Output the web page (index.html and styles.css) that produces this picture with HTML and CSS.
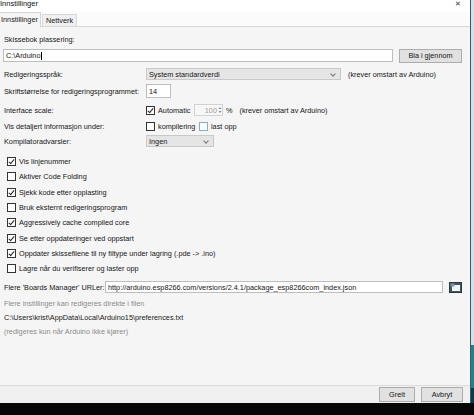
FILE: index.html
```html
<!DOCTYPE html>
<html>
<head>
<meta charset="utf-8">
<link rel="stylesheet" href="styles.css">
</head>
<body>
<div class="screen">
  <div class="main">
    <div class="dialog">
      <div class="titlebar"><span class="title">Innstillinger</span><span class="close">✕</span></div>
      <div class="tabs">
        <div class="tab active">Innstillinger</div>
        <div class="tab">Nettverk</div>
      </div>
      <div class="panel">
        <div class="line top-label">Skissebok plassering:</div>
        <div class="row sketch">
          <div class="input path">C:\Arduino<span class="caret"></span></div>
          <div class="btn browse">Bla i gjennom</div>
        </div>
        <div class="row form r-lang">
          <span class="label">Redigeringsspråk:</span>
          <div class="select lang">System standardverdi<span class="chev"></span></div>
          <span class="note">(krever omstart av Arduino)</span>
        </div>
        <div class="row form r-size">
          <span class="label">Skriftstørrelse for redigeringsprogrammet:</span>
          <div class="input size">14</div>
        </div>
        <div class="row form r-scale">
          <span class="label">Interface scale:</span>
          <span class="cb checked"></span><span class="cb-text auto">Automatic</span>
          <div class="spin">100<span class="arrows"><span>▴</span><span>▾</span></span></div>
          <span class="pct">%</span>
          <span class="note note2">(krever omstart av Arduino)</span>
        </div>
        <div class="row form r-verbose">
          <span class="label">Vis detaljert informasjon under:</span>
          <span class="cb"></span><span class="cb-text comp">kompilering</span>
          <span class="cb hover"></span><span class="cb-text">last opp</span>
        </div>
        <div class="row form r-warn">
          <span class="label">Kompilatoradvarsler:</span>
          <div class="select warn">Ingen<span class="chev"></span></div>
        </div>
        <div class="checklist">
          <div class="check-row"><span class="cb checked"></span><span class="cb-text">Vis linjenummer</span></div>
          <div class="check-row"><span class="cb"></span><span class="cb-text">Aktiver Code Folding</span></div>
          <div class="check-row"><span class="cb checked"></span><span class="cb-text">Sjekk kode etter opplasting</span></div>
          <div class="check-row"><span class="cb"></span><span class="cb-text">Bruk eksternt redigeringsprogram</span></div>
          <div class="check-row"><span class="cb checked"></span><span class="cb-text">Aggressively cache compiled core</span></div>
          <div class="check-row"><span class="cb checked"></span><span class="cb-text">Se etter oppdateringer ved oppstart</span></div>
          <div class="check-row"><span class="cb checked"></span><span class="cb-text">Oppdater skissefilene til ny filtype under lagring (.pde -&gt; .ino)</span></div>
          <div class="check-row"><span class="cb"></span><span class="cb-text">Lagre når du verifiserer og laster opp</span></div>
        </div>
        <div class="row boards">
          <span class="label-b">Flere 'Boards Manager' URLer:</span>
          <div class="input url">http://arduino.esp8266.com/versions/2.4.1/package_esp8266com_index.json</div>
          <span class="win-icon"><svg width="13" height="11" viewBox="0 0 13 11"><rect x="0.5" y="0.5" width="12" height="10" fill="#3d5366" stroke="#2a3a48"/><rect x="3" y="3" width="8" height="6" fill="#f4f6f8"/><rect x="1.5" y="1.5" width="4" height="3" fill="#7a92a8"/></svg></span>
        </div>
        <div class="line gray l1">Flere instillinger kan redigeres direkte i filen</div>
        <div class="line l2">C:\Users\krist\AppData\Local\Arduino15\preferences.txt</div>
        <div class="line gray l3">(redigeres kun når Arduino ikke kjører)</div>
      </div>
      <div class="footer">
        <div class="btn ok">Greit</div>
        <div class="btn cancel">Avbryt</div>
      </div>
    </div>
    <div class="strip"></div>
  </div>
  <div class="taskbar"></div>
</div>
</body>
</html>
```

FILE: styles.css
```css
html, body {
  margin: 0;
  padding: 0;
}
body {
  width: 474px;
  height: 415px;
  overflow: hidden;
  background: #060606;
  font-family: "Liberation Sans", Arial, sans-serif;
  font-size: 7.3px;
  color: #161616;
}
.screen {
  display: flex;
  flex-direction: column;
  height: 415px;
}
.main {
  display: flex;
  height: 403px;
}
.dialog {
  width: 470px;
  display: flex;
  flex-direction: column;
  background: #f0f0f0;
}
.strip {
  flex: 1;
  border-left: 1px solid #2f5f6c;
  background: linear-gradient(#d3e1e8 0, #d3e1e8 345px, #1f8293 345px, #1f8293 388px, #0e3c44 388px);
}
.taskbar {
  flex: 1;
  background: #070707;
}

/* title bar */
.titlebar {
  height: 12px;
  background: #fff;
  display: flex;
  justify-content: space-between;
  align-items: flex-start;
}
.title {
  margin-left: 0;
  font-size: 7.5px;
  line-height: 8px;
  color: #111;
}
.close {
  margin-right: 9px;
  font-size: 7px;
  line-height: 7px;
  color: #333;
}

/* tabs */
.tabs {
  height: 14px;
  display: flex;
  align-items: flex-end;
  background: #fbfbfb;
  position: relative;
  z-index: 1;
}
.tab {
  height: 12px;
  line-height: 11px;
  padding: 0 3px;
  border: 1px solid #d9d9d9;
  border-bottom: none;
  box-sizing: border-box;
  background: #f0f0f0;
  margin-left: 1px;
}
.tab.active {
  height: 15px;
  margin-bottom: -1px;
  margin-left: -1px;
  padding: 1px 2px 0 1px;
  line-height: 11px;
  background: #f5f5f5;
  border-color: #d4d4d4;
  white-space: nowrap;
}

/* panel */
.panel {
  flex: 1;
  border-top: 1px solid #d8d8d8;
  border-bottom: 1px solid #dcdcdc;
  background: #f5f5f5;
  padding: 8px 0 0 4px;
  display: flex;
  flex-direction: column;
}
.line {
  height: 10px;
  line-height: 10px;
  white-space: nowrap;
}
.gray {
  color: #8c8c8c;
}
.row {
  display: flex;
  align-items: center;
  white-space: nowrap;
}
.sketch {
  margin-top: 4px;
  height: 13px;
}
.input {
  background: #fff;
  border: 1px solid #bdbdbd;
  box-sizing: border-box;
  padding-left: 2px;
  display: flex;
  align-items: center;
  overflow: hidden;
}
.input.path {
  width: 390px;
  height: 13px;
  margin-left: -1px;
}
.caret {
  width: 1px;
  height: 8px;
  background: #000;
  margin-left: 1px;
}
.btn {
  background: #e1e1e1;
  border: 1px solid #adadad;
  box-sizing: border-box;
  display: flex;
  align-items: center;
  justify-content: center;
}
.browse {
  width: 63px;
  height: 14px;
  margin-left: 6px;
}
.form {
  height: 12px;
}
.label {
  width: 142px;
}
.select {
  background: #e5e5e5;
  border: 1px solid #c9c9c9;
  box-sizing: border-box;
  height: 12px;
  padding-left: 2px;
  display: flex;
  align-items: center;
  position: relative;
}
.chev {
  position: absolute;
  right: 5px;
  top: 3px;
  width: 3px;
  height: 3px;
  border-right: 1px solid #777;
  border-bottom: 1px solid #777;
  transform: rotate(45deg);
}
.select.lang {
  width: 195px;
}
.note {
  margin-left: 7px;
}
.r-lang {
  margin-top: 6px;
}
.r-size {
  margin-top: 4px;
  height: 14px;
}
.input.size {
  width: 25px;
  height: 14px;
  padding-left: 2px;
}
.r-scale {
  margin-top: 6px;
}
.cb {
  width: 9px;
  height: 9px;
  border: 1px solid #333;
  box-sizing: border-box;
  background: #fff;
  flex: none;
  position: relative;
}
.cb.hover {
  border-color: #7fb0c9;
}
.cb.checked::after {
  content: "";
  position: absolute;
  left: 2px;
  top: 0px;
  width: 2px;
  height: 5px;
  border-right: 1px solid #222;
  border-bottom: 1px solid #222;
  transform: rotate(40deg);
}
.cb-text {
  margin-left: 3px;
}
.cb-text.auto {
  width: 35px;
}
.spin {
  margin-left: 1px;
  width: 29px;
  height: 12px;
  border: 1px solid #d2d2d2;
  box-sizing: border-box;
  background: #f7f7f7;
  color: #a0a0a0;
  display: flex;
  align-items: center;
  justify-content: flex-end;
}
.arrows {
  display: flex;
  flex-direction: column;
  font-size: 4px;
  line-height: 4px;
  color: #666;
  margin-left: 2px;
  margin-right: 1px;
}
.pct {
  margin-left: 3px;
}
.note2 {
  margin-left: 7px;
}
.r-verbose {
  margin-top: 5px;
  height: 10px;
}
.cb-text.comp {
  width: 41px;
}
.r-warn {
  margin-top: 4px;
}
.select.warn {
  width: 68px;
}
.checklist {
  margin-top: 7px;
  display: flex;
  flex-direction: column;
}
.check-row {
  height: 15.3px;
  display: flex;
  align-items: center;
  padding-left: 3px;
  white-space: nowrap;
}
.boards {
  margin-top: 5px;
  height: 12px;
}
.label-b {
  width: 101px;
}
.input.url {
  width: 338px;
  height: 12px;
}
.win-icon {
  margin-left: 6px;
  display: flex;
}
.l1 {
  margin-top: 6px;
}
.l2 {
  margin-top: 4px;
  color: #222;
}
.l3 {
  margin-top: 4px;
}

/* footer */
.footer {
  height: 17px;
  display: flex;
  justify-content: flex-end;
  align-items: flex-start;
  padding: 1px 7px 0 0;
  box-sizing: border-box;
  gap: 6px;
}
.ok {
  width: 36px;
  height: 15px;
}
.cancel {
  width: 42px;
  height: 15px;
}
```
